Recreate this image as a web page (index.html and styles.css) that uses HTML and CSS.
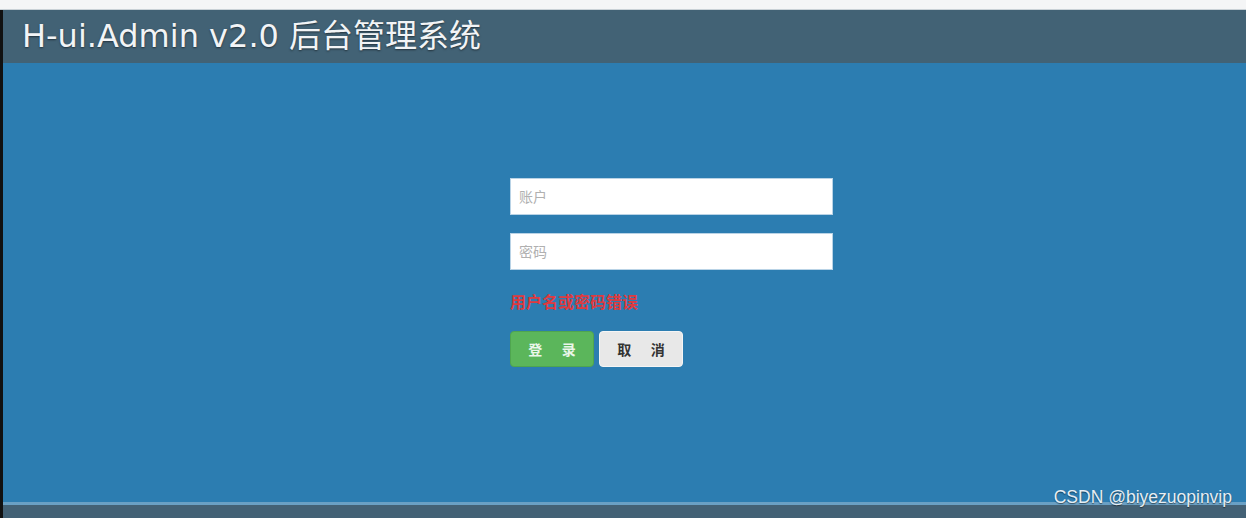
FILE: index.html
```html
<!DOCTYPE html>
<html>
<head>
<meta charset="UTF-8">
<title>后台登录 - H-ui.Admin v2.0</title>
<link rel="stylesheet" href="styles.css">
</head>
<body>
<div class="topstrip"></div>
<div class="frame">
	<div class="edge"></div>
	<div class="page">
		<div class="header">H-ui.Admin v2.0 后台管理系统</div>
		<div class="loginWraper">
			<form class="loginBox">
				<input type="text" class="input-text" placeholder="账户">
				<input type="password" class="input-text" placeholder="密码">
				<div class="errmsg">用户名或密码错误</div>
				<div class="btnrow">
					<button type="button" class="btn btn-success">登&nbsp;&nbsp;&nbsp;&nbsp;&nbsp;录</button>
					<button type="button" class="btn btn-default">取&nbsp;&nbsp;&nbsp;&nbsp;&nbsp;消</button>
				</div>
			</form>
			<div class="watermark">CSDN @biyezuopinvip</div>
		</div>
		<div class="footline"></div>
		<div class="footer"></div>
	</div>
</div>
</body>
</html>
```

FILE: styles.css
```css
body{
	margin: 0;
	height: 518px;
	overflow: hidden;
	font-family: "Liberation Sans", "Noto Sans CJK SC", sans-serif;
	background: #2c7db1;
}
.topstrip{
	height: 9px;
	background: #f4f5f6;
	border-bottom: 1px solid #c9d1d6;
}
.frame{
	display: flex;
	height: 508px;
}
.edge{
	width: 3px;
	background: #111;
}
.page{
	flex: 1;
	display: flex;
	flex-direction: column;
}
.header{
	height: 53px;
	background: #426275;
	color: #f2f4f6;
	font-family: "DejaVu Sans", "Noto Sans CJK SC", sans-serif;
	font-size: 32px;
	line-height: 52px;
	padding-left: 19px;
	text-shadow: 0 1px 2px rgba(0,0,0,0.5);
}
.loginWraper{
	position: relative;
	flex: 1;
	background: #2c7db1;
	padding: 115px 0 0 507px;
}
.loginBox{
	width: 323px;
}
.input-text{
	display: block;
	box-sizing: border-box;
	width: 323px;
	height: 37px;
	margin-bottom: 18px;
	padding: 0 8px;
	border: 1px solid #b9d3e6;
	background: #fff;
	font-size: 14px;
	font-family: "Liberation Sans", "Noto Sans CJK SC", sans-serif;
	outline: none;
}
.input-text::placeholder{
	color: #b0b0b0;
}
.errmsg{
	margin-top: 23px;
	color: #de3a3f;
	font-size: 16px;
	line-height: 20px;
	font-weight: bold;
}
.btnrow{
	display: flex;
	gap: 5px;
	margin-top: 18px;
}
.btn{
	width: 84px;
	height: 36px;
	border-radius: 4px;
	font-size: 14px;
	font-weight: bold;
	font-family: "Liberation Sans", "Noto Sans CJK SC", sans-serif;
	cursor: pointer;
}
.btn-success{
	background: #5bb65b;
	border: 1px solid #4fa54f;
	color: #eaf6ea;
}
.btn-default{
	background: #e8e8e8;
	border: 1px solid #f5f5f5;
	color: #333;
}
.watermark{
	position: absolute;
	right: 14px;
	bottom: -6px;
	color: #e6eef4;
	font-size: 17.5px;
	text-shadow: 0 1px 1px rgba(0,0,0,0.5);
}
.footline{
	height: 3px;
	background: #6aa0c4;
}
.footer{
	height: 13px;
	background: #436175;
}
```
